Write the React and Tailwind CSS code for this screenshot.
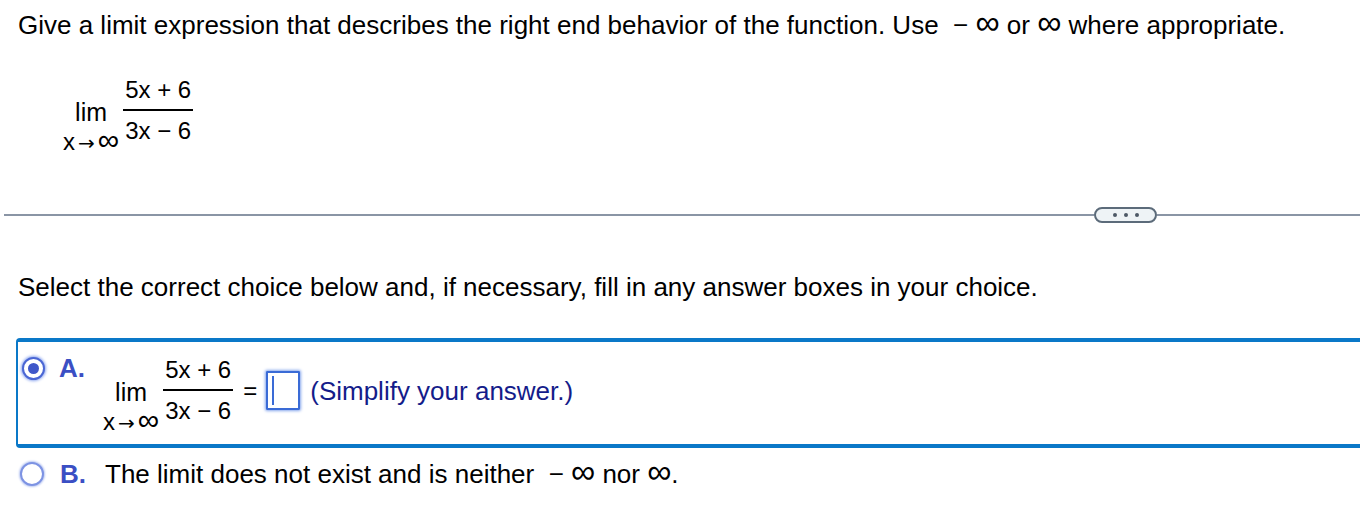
import React from 'react';

function Inf() {
  return <span className="text-[1.3em] leading-[0]">∞</span>;
}

function Limit({ children }) {
  return (
    <div className="flex items-start text-[24px] leading-[24px] text-black">
      {/* lim with subscript */}
      <div className="flex flex-col items-center pt-[22px]">
        <span className="text-[25px]">lim</span>
        <span className="mt-[6px] whitespace-nowrap">
          x<span className="mx-[3px] font-['DejaVu_Sans',sans-serif] text-[20px] leading-[0]">→</span><span className="text-[1.25em] leading-[0]">∞</span>
        </span>
      </div>
      <div className="ml-[4px] flex items-center">
        <div className="flex flex-col items-stretch">
          <span className="px-[2px] text-center">5x + 6</span>
          <div className="mt-[7px] h-[2px] bg-black" />
          <span className="mt-[8px] text-center">3x − 6</span>
        </div>
        {children}
      </div>
    </div>
  );
}

function Radio({ checked }) {
  if (checked) {
    return (
      <div className="flex h-[23px] w-[23px] items-center justify-center rounded-full border-2 border-[#4a66d4] bg-white shadow-[0_0_3px_1px_#8aa4ee]">
        <div className="h-[11px] w-[11px] rounded-full bg-[#3f57c9]" />
      </div>
    );
  }
  return (
    <div className="h-[24px] w-[24px] rounded-full border-2 border-[#7d93e3] bg-white shadow-[0_0_2px_1px_#b9c7f2]" />
  );
}

export default function App() {
  return (
    <div className="h-[512px] w-[1360px] overflow-hidden bg-white font-['Liberation_Sans',Arial,sans-serif] text-black">
      <p className="pl-[18px] pt-[12px] text-[26px] leading-[26px]">
        Give a limit expression that describes the right end behavior of the function. Use&nbsp; − <Inf /> or <Inf /> where appropriate.
      </p>

      <div className="ml-[63px] mt-[40px]">
        <Limit />
      </div>

      {/* separator with collapse pill */}
      <div className="ml-[4px] mt-[53px] flex h-[16px] items-center">
        <div className="h-[2px] flex-1 bg-[#8a95a5]" />
        <div className="flex h-[16px] w-[63px] items-center justify-center gap-[7px] rounded-full border-2 border-[#5c6b7a] bg-[#eef3f6]">
          <span className="h-[4px] w-[4px] rounded-full bg-[#4d5966]" />
          <span className="h-[4px] w-[4px] rounded-full bg-[#4d5966]" />
          <span className="h-[4px] w-[4px] rounded-full bg-[#4d5966]" />
        </div>
        <div className="h-[2px] w-[203px] bg-[#8a95a5]" />
      </div>

      <p className="mt-[51px] pl-[18px] text-[26px] leading-[26px]">
        Select the correct choice below and, if necessary, fill in any answer boxes in your choice.
      </p>

      {/* choice A, selected */}
      <div className="ml-[16px] mr-[-20px] mt-[38px] flex h-[110px] items-start rounded-l-[4px] border-b-4 border-l-2 border-t-4 border-[#0a78c8] pt-[13px]">
        <div className="ml-[4px] mt-[2px]">
          <Radio checked />
        </div>
        <span className="ml-[14px] w-[44px] text-[26px] font-bold leading-[26px] text-[#3b4fc4]">A.</span>
        <div className="mt-[3px]">
          <Limit>
            <span className="ml-[10px]">=</span>
            <div className="ml-[9px] flex h-[39px] w-[34px] items-center rounded-[1px] border-2 border-[#3a6bd6] pl-[4px] shadow-[0_0_3px_1px_#86a6ec]">
              <div className="h-[29px] w-[2px] bg-[#3a6bd6]" />
            </div>
            <span className="ml-[10px] text-[26px] leading-[26px] text-[#141c8a]">(Simplify your answer.)</span>
          </Limit>
        </div>
      </div>

      {/* choice B */}
      <div className="mt-[13px] flex h-[26px] items-center pl-[20px] text-[26px] leading-[26px]">
        <Radio />
        <span className="ml-[16px] w-[45px] font-bold text-[#3b4fc4]">B.</span>
        <span>The limit does not exist and is neither&nbsp; − <Inf /> nor <Inf />.</span>
      </div>
    </div>
  );
}
